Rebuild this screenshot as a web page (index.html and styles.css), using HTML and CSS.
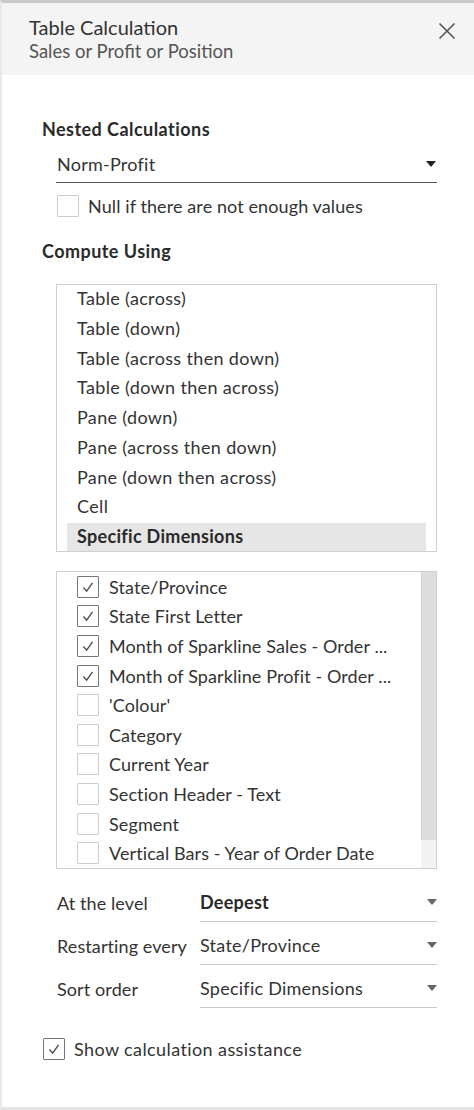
FILE: index.html
```html
<!DOCTYPE html>
<html>
<head>
<meta charset="utf-8">
<link rel="stylesheet" href="styles.css">
</head>
<body>
<div class="frame">
  <div class="header">
    <div class="titles">
      <div class="title">Table Calculation</div>
      <div class="subtitle">Sales or Profit or Position</div>
    </div>
    <svg class="close" width="18" height="18" viewBox="0 0 18 18"><path d="M1.5 1.5 L16.5 16.5 M16.5 1.5 L1.5 16.5" stroke="#555" stroke-width="1.6" fill="none"/></svg>
  </div>
  <div class="content">
    <div class="heading h-nested">Nested Calculations</div>
    <div class="select select-main">
      <span class="select-text">Norm-Profit</span>
      <span class="arrow arrow-dark"></span>
    </div>
    <div class="check-row row-null">
      <span class="cb"></span>
      <span class="cb-label">Null if there are not enough values</span>
    </div>
    <div class="heading h-compute">Compute Using</div>
    <div class="listbox">
      <div class="list-inner">
        <div class="item">Table (across)</div>
        <div class="item">Table (down)</div>
        <div class="item">Table (across then down)</div>
        <div class="item">Table (down then across)</div>
        <div class="item">Pane (down)</div>
        <div class="item">Pane (across then down)</div>
        <div class="item">Pane (down then across)</div>
        <div class="item">Cell</div>
        <div class="item selected">Specific Dimensions</div>
      </div>
    </div>
    <div class="checklist">
      <div class="check-items">
        <div class="ci"><span class="cb checked"><svg viewBox="0 0 22 22"><path d="M6 11.5 L9.5 15.5 L16 6.5" stroke="#4a4a4a" stroke-width="1.5" fill="none"/></svg></span><span class="ci-label">State/Province</span></div>
        <div class="ci"><span class="cb checked"><svg viewBox="0 0 22 22"><path d="M6 11.5 L9.5 15.5 L16 6.5" stroke="#4a4a4a" stroke-width="1.5" fill="none"/></svg></span><span class="ci-label">State First Letter</span></div>
        <div class="ci"><span class="cb checked"><svg viewBox="0 0 22 22"><path d="M6 11.5 L9.5 15.5 L16 6.5" stroke="#4a4a4a" stroke-width="1.5" fill="none"/></svg></span><span class="ci-label">Month of Sparkline Sales - Order ...</span></div>
        <div class="ci"><span class="cb checked"><svg viewBox="0 0 22 22"><path d="M6 11.5 L9.5 15.5 L16 6.5" stroke="#4a4a4a" stroke-width="1.5" fill="none"/></svg></span><span class="ci-label">Month of Sparkline Profit - Order ...</span></div>
        <div class="ci"><span class="cb"></span><span class="ci-label">'Colour'</span></div>
        <div class="ci"><span class="cb"></span><span class="ci-label">Category</span></div>
        <div class="ci"><span class="cb"></span><span class="ci-label">Current Year</span></div>
        <div class="ci"><span class="cb"></span><span class="ci-label">Section Header - Text</span></div>
        <div class="ci"><span class="cb"></span><span class="ci-label">Segment</span></div>
        <div class="ci"><span class="cb"></span><span class="ci-label">Vertical Bars - Year of Order Date</span></div>
      </div>
      <div class="scrollbar"><div class="thumb"></div></div>
    </div>
    <div class="fields">
      <div class="field">
        <span class="field-label">At the level</span>
        <div class="select select-small"><span class="select-text bold">Deepest</span><span class="arrow"></span></div>
      </div>
      <div class="field">
        <span class="field-label">Restarting every</span>
        <div class="select select-small"><span class="select-text">State/Province</span><span class="arrow"></span></div>
      </div>
      <div class="field">
        <span class="field-label">Sort order</span>
        <div class="select select-small"><span class="select-text">Specific Dimensions</span><span class="arrow"></span></div>
      </div>
    </div>
    <div class="check-row row-assist">
      <span class="cb checked"><svg viewBox="0 0 22 22"><path d="M6 11.5 L9.5 15.5 L16 6.5" stroke="#4a4a4a" stroke-width="1.5" fill="none"/></svg></span>
      <span class="cb-label">Show calculation assistance</span>
    </div>
  </div>
</div>
</body>
</html>
```
FILE: styles.css
```css
* { box-sizing: border-box; }
html, body { margin: 0; padding: 0; background: #fff; }
body {
  width: 474px;
  height: 1110px;
  overflow: hidden;
  font-family: Lato, "Liberation Sans", sans-serif;
  color: #333;
}
.frame {
  width: 474px;
  height: 1110px;
  border-top: 3px solid #c8c8c8;
  border-left: 2px solid #e9e9e9;
  border-bottom: 3px solid #e4e4e4;
  display: flex;
  flex-direction: column;
}
.header {
  height: 72px;
  background: #f4f4f4;
  display: flex;
  justify-content: space-between;
  align-items: flex-start;
  padding: 12px 18px 0 27px;
  flex-shrink: 0;
}
.title {
  font-size: 20px;
  line-height: 24px;
  color: #333;
}
.subtitle {
  font-size: 18.5px;
  line-height: 24px;
  color: #555;
}
.close { margin-top: 7px; }
.content {
  padding-left: 40px;
  padding-right: 37px;
  display: flex;
  flex-direction: column;
}
.heading {
  font-size: 18px;
  font-weight: bold;
  line-height: 22px;
  letter-spacing: 0.45px;
  color: #2a2a2a;
}
.h-nested { margin-top: 43px; }
.h-compute { margin-top: 19px; }
.select {
  display: flex;
  align-items: center;
  justify-content: space-between;
  font-size: 18px;
  letter-spacing: 0.25px;
}
.select-main {
  margin-left: 14px;
  height: 35px;
  margin-top: 8px;
  border-bottom: 1.5px solid #555;
  padding: 0 1px 2px 1px;
}
.arrow {
  width: 0; height: 0;
  border-left: 5px solid transparent;
  border-right: 5px solid transparent;
  border-top: 6px solid #666;
  margin-right: 0;
}
.arrow-dark { border-top-color: #222; }
.check-row {
  display: flex;
  align-items: center;
  height: 30px;
}
.row-null { margin-left: 15px; margin-top: 8px; }
.cb {
  width: 22px; height: 22px;
  border: 1px solid #ccc;
  border-radius: 1px;
  flex-shrink: 0;
  display: block;
  background: #fff;
}
.cb.checked { border-color: #777; }
.cb svg { width: 20px; height: 20px; display: block; }
.cb-label { font-size: 18px; margin-left: 9px; letter-spacing: 0.1px; }
.listbox {
  margin-left: 14px;
  margin-top: 22px;
  height: 268px;
  border: 1px solid #cfcfcf;
  overflow: hidden;
  padding: 0 10px;
}
.item {
  height: 29.75px;
  line-height: 27px;
  font-size: 18px;
  letter-spacing: 0.35px;
  padding-left: 10px;
}
.item.selected {
  background: #e6e6e6;
  font-weight: bold;
  letter-spacing: 0.3px;
  color: #2a2a2a;
}
.checklist {
  margin-left: 14px;
  margin-top: 19px;
  height: 298px;
  border: 1px solid #cfcfcf;
  display: flex;
  overflow: hidden;
}
.check-items { flex: 1; }
.ci {
  height: 29.6px;
  display: flex;
  align-items: center;
  padding-left: 20px;
}
.ci-label { font-size: 18px; margin-left: 10px; white-space: nowrap; letter-spacing: 0.1px; }
.scrollbar {
  width: 15px;
  background: #f2f2f2;
  display: flex;
  flex-direction: column;
}
.thumb {
  height: 268px;
  background: #dddddd;
  border-left: 1px solid #d4d4d4;
}
.fields {
  margin-top: 16px;
  display: flex;
  flex-direction: column;
  gap: 6px;
}
.field {
  display: flex;
  align-items: flex-start;
  margin-left: 15px;
}
.field-label {
  width: 143px;
  font-size: 18px;
  line-height: 36px;
  letter-spacing: 0.1px;
}
.select-small {
  flex: 1;
  height: 37px;
  border-bottom: 1px solid #c8c8c8;
  padding: 0 0 2px 0;
}
.bold { font-weight: bold; color: #2a2a2a; }
.row-assist { margin-top: 26px; margin-left: 1px; }
.row-assist .cb-label { margin-left: 9px; letter-spacing: 0.4px; }
```
